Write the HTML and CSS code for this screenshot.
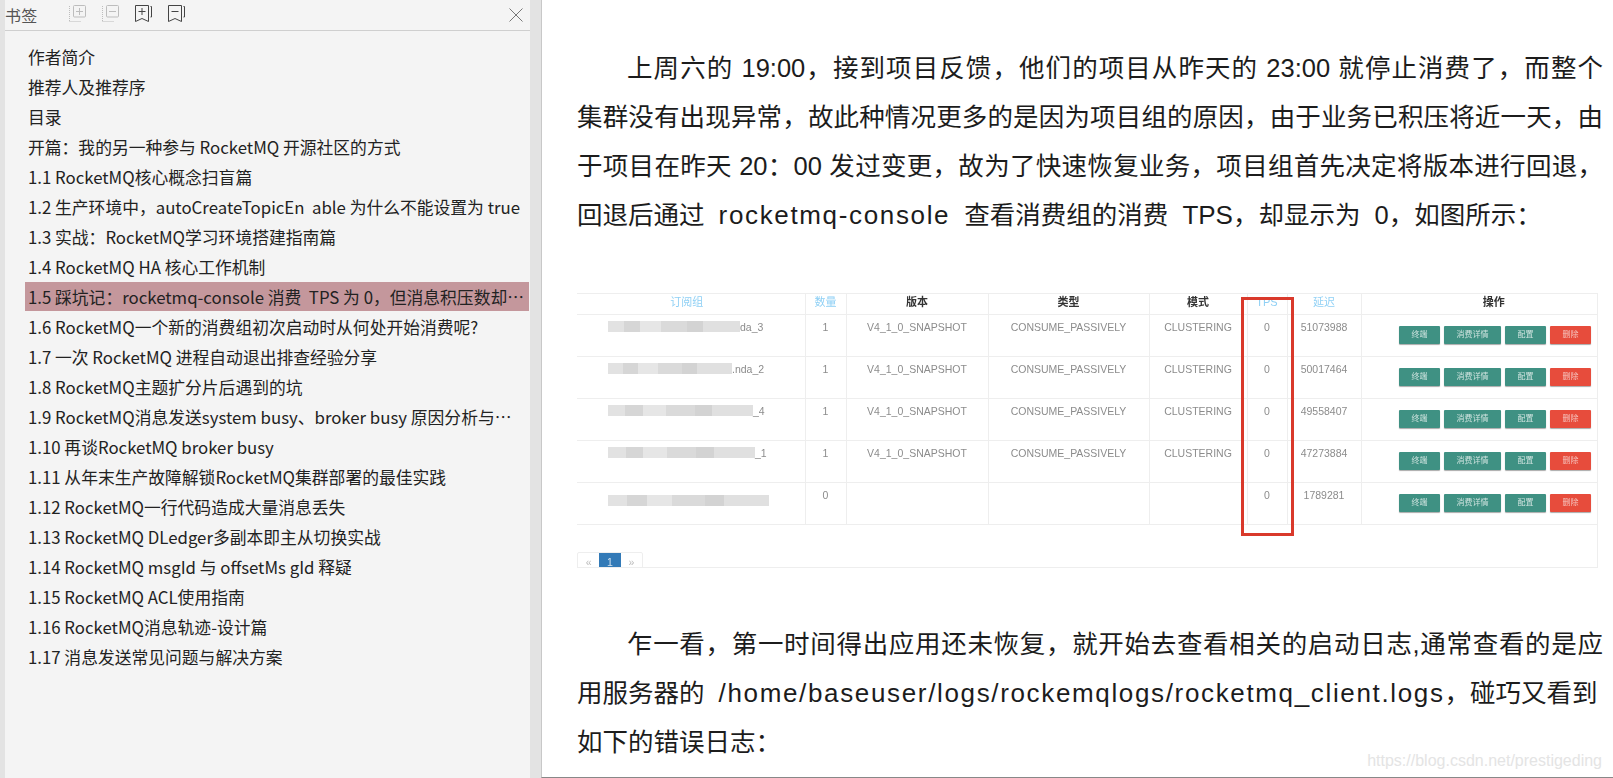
FILE: index.html
```html
<!DOCTYPE html>
<html lang="zh-CN">
<head>
  <meta charset="UTF-8" />
  <title>RocketMQ 实战</title>
  <link rel="stylesheet" href="styles.css">
</head>
<body>
  <div class="reader">
    <aside class="sidebar">
      <div class="side-head">
        <span class="side-title">书签</span>
        <div class="side-tools">
          <svg class="tool" viewBox="0 0 17 17"><path class="dots" d="M.5 1v16M.5 16.500h11"/><rect class="soft" x="4.500" y=".5" width="12" height="11.500" rx="1"/><path class="soft" d="M7 6.500h7M10.500 3v7"/></svg>
          <svg class="tool" viewBox="0 0 17 17"><path class="dots" d="M.5 1v16M.5 16.500h11"/><rect class="soft" x="4.500" y=".5" width="12" height="11.500" rx="1"/><path class="soft" d="M7 6.500h7"/></svg>
          <svg class="tool" viewBox="0 0 17 17"><path class="hard" d="M.5 16.500V.5h13v16L7 13.500zM15.500 1.500h1v10.500h-1M3.500 6.500h7M7 3v7"/></svg>
          <svg class="tool" viewBox="0 0 17 17"><path class="hard" d="M.5 16.500V.5h13v16L7 13.500zM15.500 1.500h1v10.500h-1M3.500 6.500h7"/></svg>
        </div>
        <svg class="close" viewBox="0 0 14 14"><path d="M.5.5l13 13M13.500.5l-13 13"/></svg>
      </div>
      <ul class="toc">
        <li>作者简介</li>
        <li>推荐人及推荐序</li>
        <li>目录</li>
        <li>开篇：我的另一种参与 RocketMQ 开源社区的方式</li>
        <li>1.1 RocketMQ核心概念扫盲篇</li>
        <li>1.2 生产环境中，autoCreateTopicEn  able 为什么不能设置为 true</li>
        <li>1.3 实战：RocketMQ学习环境搭建指南篇</li>
        <li>1.4 RocketMQ HA 核心工作机制</li>
        <li class="active">1.5 踩坑记：rocketmq-console 消费  TPS 为 0，但消息积压数却…</li>
        <li>1.6 RocketMQ一个新的消费组初次启动时从何处开始消费呢?</li>
        <li>1.7 一次 RocketMQ 进程自动退出排查经验分享</li>
        <li>1.8 RocketMQ主题扩分片后遇到的坑</li>
        <li>1.9 RocketMQ消息发送system busy、broker busy 原因分析与…</li>
        <li>1.10 再谈RocketMQ broker busy</li>
        <li>1.11 从年末生产故障解锁RocketMQ集群部署的最佳实践</li>
        <li>1.12 RocketMQ一行代码造成大量消息丢失</li>
        <li>1.13 RocketMQ DLedger多副本即主从切换实战</li>
        <li>1.14 RocketMQ msgId 与 offsetMs gId 释疑</li>
        <li>1.15 RocketMQ ACL使用指南</li>
        <li>1.16 RocketMQ消息轨迹-设计篇</li>
        <li>1.17 消息发送常见问题与解决方案</li>
      </ul>
    </aside>

    <main class="page">
      <p class="para">
        <span class="line first">上周六的 19:00，接到项目反馈，他们的项目从昨天的 23:00 就停止消费了，而整个</span>
        <span class="line">集群没有出现异常，故此种情况更多的是因为项目组的原因，由于业务已积压将近一天，由</span>
        <span class="line">于项目在昨天 20：00 发过变更，故为了快速恢复业务，项目组首先决定将版本进行回退，</span>
        <span class="line free">回退后通过 <span class="latin">rocketmq-console</span> 查看消费组的消费 <span class="caps">TPS</span>，却显示为 0，如图所示：</span>
      </p>

      <div class="shot">
        <table class="grid">
          <colgroup>
            <col class="c-name"><col class="c-num"><col class="c-ver"><col class="c-type"><col class="c-mode"><col class="c-tps"><col class="c-delay"><col class="c-ops">
          </colgroup>
          <thead>
            <tr>
              <th class="link">订阅组</th><th class="link">数量</th><th>版本</th><th>类型</th><th>模式</th><th class="link">TPS</th><th class="link">延迟</th><th>操作</th>
            </tr>
          </thead>
          <tbody>
            <tr>
              <td><div class="name"><span class="redact w132"></span>da_3</div></td>
              <td>1</td><td>V4_1_0_SNAPSHOT</td><td>CONSUME_PASSIVELY</td><td>CLUSTERING</td><td>0</td><td>51073988</td>
              <td><div class="ops"><span class="btn">终端</span><span class="btn wide">消费详情</span><span class="btn">配置</span><span class="btn del">删除</span></div></td>
            </tr>
            <tr>
              <td><div class="name"><span class="redact w124"></span>.nda_2</div></td>
              <td>1</td><td>V4_1_0_SNAPSHOT</td><td>CONSUME_PASSIVELY</td><td>CLUSTERING</td><td>0</td><td>50017464</td>
              <td><div class="ops"><span class="btn">终端</span><span class="btn wide">消费详情</span><span class="btn">配置</span><span class="btn del">删除</span></div></td>
            </tr>
            <tr>
              <td><div class="name"><span class="redact w145"></span>_4</div></td>
              <td>1</td><td>V4_1_0_SNAPSHOT</td><td>CONSUME_PASSIVELY</td><td>CLUSTERING</td><td>0</td><td>49558407</td>
              <td><div class="ops"><span class="btn">终端</span><span class="btn wide">消费详情</span><span class="btn">配置</span><span class="btn del">删除</span></div></td>
            </tr>
            <tr>
              <td><div class="name"><span class="redact w147"></span>_1</div></td>
              <td>1</td><td>V4_1_0_SNAPSHOT</td><td>CONSUME_PASSIVELY</td><td>CLUSTERING</td><td>0</td><td>47273884</td>
              <td><div class="ops"><span class="btn">终端</span><span class="btn wide">消费详情</span><span class="btn">配置</span><span class="btn del">删除</span></div></td>
            </tr>
            <tr>
              <td><div class="name last"><span class="redact w161"></span></div></td>
              <td>0</td><td></td><td></td><td></td><td>0</td><td>1789281</td>
              <td><div class="ops"><span class="btn">终端</span><span class="btn wide">消费详情</span><span class="btn">配置</span><span class="btn del">删除</span></div></td>
            </tr>
          </tbody>
        </table>
        <div class="pager"><span>«</span><span class="on">1</span><span>»</span></div>
        <div class="mark"></div>
      </div>

      <p class="para second">
        <span class="line first">乍一看，第一时间得出应用还未恢复，就开始去查看相关的启动日志,通常查看的是应</span>
        <span class="line free">用服务器的 <span class="latin">/home/baseuser/logs/rockemqlogs/rocketmq_client.logs</span>，碰巧又看到</span>
        <span class="line free">如下的错误日志：</span>
      </p>

      <span class="watermark">https://blog.csdn.net/prestigeding</span>
    </main>
  </div>
</body>
</html>
```

FILE: styles.css
```css
html, body {
  margin: 0;
  height: 100%;
  overflow: hidden;
}
body {
  background: #e3e3e3;
  color: #222;
  font-family: "Noto Sans CJK SC", "Noto Sans", sans-serif;
}
.reader {
  display: flex;
  height: 778px;
  padding-left: 5px;
  box-sizing: border-box;
}

/* bookmarks panel */
.sidebar {
  width: 525px;
  flex: none;
  background: #f4f4f4;
  margin-right: 11px;
}
.side-head {
  display: flex;
  align-items: center;
  height: 30px;
  border-bottom: 1px solid #cfcfcf;
  padding-right: 7px;
}
.side-title {
  font-size: 16px;
  color: #555;
  letter-spacing: 0.3px;
  width: 64px;
}
.side-tools {
  display: flex;
  gap: 16px;
  margin-bottom: 3px;
}
.tool {
  width: 17px;
  height: 17px;
  fill: none;
}
.dots {
  stroke: #bdbdbd;
  stroke-dasharray: 1 1;
}
.soft {
  stroke: #bdbdbd;
}
.hard {
  stroke: #444;
}
.close {
  width: 14px;
  height: 14px;
  margin-left: auto;
  fill: none;
  stroke: #777;
}
.toc {
  list-style: none;
  margin: 11px 0 0;
  padding: 0 1px 0 20px;
}
.toc li {
  height: 29px;
  line-height: 30px;
  margin-bottom: 1px;
  padding-left: 3px;
  font-size: 16.800px;
  white-space: pre;
}
.toc .active {
  background: #c4979c;
}

/* page */
.page {
  flex: 1;
  position: relative;
  background: #fff;
  border-left: 1px solid #c8c8c8;
  border-bottom: 1px solid #888;
  padding: 44px 10px 0 35px;
  font-family: "Liberation Sans", "Noto Sans CJK SC", sans-serif;
  font-size: 25.500px;
  color: #1c1c1c;
}
.para {
  margin: 0;
  line-height: 49px;
}
.second {
  margin-top: 52px;
}
.line {
  display: block;
  text-align: justify;
  text-align-last: justify;
  white-space: nowrap;
}
.first {
  text-indent: 50px;
}
.free {
  text-align-last: left;
  word-spacing: 7px;
}
.latin {
  font-size: 26px;
  letter-spacing: 1.650px;
}
.caps {
  font-size: 26px;
}
.watermark {
  position: absolute;
  right: 11px;
  bottom: 7px;
  font-size: 16px;
  color: #e4e4e4;
}

/* screenshot inside the page */
.shot {
  position: relative;
  width: 1021px;
  height: 275px;
  margin-top: 53px;
  border-right: 1px solid #eee;
  border-bottom: 1px solid #eee;
  box-sizing: border-box;
  overflow: hidden;
  filter: blur(0.6px);
  font-size: 10.500px;
  color: #8c8c8c;
}
.grid {
  width: 1021px;
  table-layout: fixed;
  border-collapse: collapse;
  border-top: 1px solid #eee;
}
.c-name { width: 228px; }
.c-num { width: 41px; }
.c-ver { width: 142px; }
.c-type { width: 161px; }
.c-mode { width: 98px; }
.c-tps { width: 40px; }
.c-delay { width: 74px; }
.c-ops { width: 237px; }
.grid th,
.grid td {
  padding: 0;
  text-align: center;
  vertical-align: top;
  border-bottom: 1px solid #eee;
  border-left: 1px solid #eee;
}
.grid th:first-child,
.grid td:first-child {
  border-left: none;
}
.grid th {
  height: 20px;
  line-height: 17px;
  font-size: 11px;
  color: #333;
}
.grid th:first-child {
  padding-right: 8px;
}
.grid th:last-child {
  padding-left: 28px;
}
.grid th.link {
  font-weight: normal;
  color: #8fd0f5;
}
.grid td {
  height: 42px;
  padding-top: 6px;
  line-height: 13px;
  box-sizing: border-box;
}
.name {
  display: flex;
  padding-left: 31px;
}
.name.last {
  padding-top: 6px;
}
.redact {
  height: 11px;
  background: linear-gradient(90deg, #e2e2e2 0 12%, #d6d6d6 12% 24%, #e6e6e6 24% 40%, #dadada 40% 60%, #d3d3d3 60% 72%, #e0e0e0 72% 100%);
}
.w132 { width: 132px; }
.w124 { width: 124px; }
.w145 { width: 145px; }
.w147 { width: 147px; }
.w161 { width: 161px; }
.ops {
  display: flex;
  justify-content: flex-end;
  gap: 4px;
  padding: 5px 7px 0 0;
}
.btn {
  width: 41px;
  height: 18px;
  line-height: 18px;
  font-size: 8px;
  color: #cfe3df;
  background: #3f9183;
  border-radius: 1px;
  box-shadow: 0 1px 1px #aaa;
}
.btn.wide {
  width: 57px;
}
.btn.del {
  background: #e74c3c;
  color: #f5c4be;
}
.pager {
  display: flex;
  width: 66px;
  height: 20px;
  margin-top: 27px;
  border: 1px solid #eee;
  border-radius: 2px;
  box-sizing: border-box;
  line-height: 18px;
  color: #bbb;
  text-align: center;
}
.pager span {
  width: 22px;
}
.pager .on {
  background: #337ab7;
  color: #cfe0ef;
}
.mark {
  position: absolute;
  left: 664px;
  top: 4px;
  width: 53px;
  height: 239px;
  border: 3px solid #d9392b;
  box-sizing: border-box;
}
```
